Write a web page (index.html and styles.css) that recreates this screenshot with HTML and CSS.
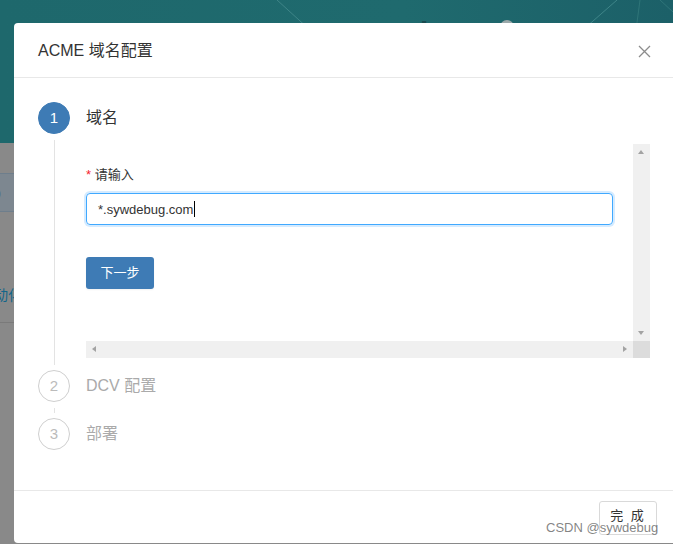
FILE: index.html
```html
<!DOCTYPE html>
<html lang="zh-CN">
<head>
<meta charset="utf-8">
<title>ACME 域名配置</title>
<link rel="stylesheet" href="styles.css">
</head>
<body>
<div class="page">
  <div class="backdrop">
    <div class="bg-top">
      <svg class="bg-lines" width="673" height="143" viewBox="0 0 673 143">
        <line x1="277" y1="0" x2="310" y2="30" stroke="#3f8588" stroke-width="1"/>
        <line x1="617" y1="0" x2="585" y2="28" stroke="#3f8588" stroke-width="1"/>
        <line x1="640" y1="0" x2="636" y2="30" stroke="#2f7578" stroke-width="1"/>
        <line x1="660" y1="0" x2="673" y2="12" stroke="#2f7578" stroke-width="1"/>
        <circle cx="507" cy="27" r="7" fill="#9aa8a9"/>
      </svg>
      <div class="bg-brand">Certimate</div>
    </div>
    <div class="bg-bottom">
      <div class="bg-box">)</div>
      <div class="bg-link">自动化</div>
      <div class="bg-rule"></div>
    </div>
  </div>

  <div class="modal">
    <div class="modal-header">
      <div class="modal-title">ACME 域名配置</div>
      <svg class="modal-close" width="13" height="13" viewBox="0 0 13 13">
        <path d="M1 1 L12 12 M12 1 L1 12" stroke="#8c8c8c" stroke-width="1.3" fill="none"/>
      </svg>
    </div>

    <div class="modal-body">
      <div class="step step-active">
        <div class="step-rail">
          <div class="step-dot">1</div>
          <div class="step-line"></div>
        </div>
        <div class="step-main">
          <div class="step-title">域名</div>
          <div class="scroll-box">
            <div class="scroll-content">
              <div class="field-label"><span class="req">*</span> 请输入</div>
              <div class="input-focus"><span>*.sywdebug.com</span><span class="caret"></span></div>
              <div class="btn-primary">下一步</div>
            </div>
            <div class="vscroll">
              <span class="arr arr-up"></span>
              <span class="arr arr-down"></span>
            </div>
            <div class="hscroll">
              <span class="arr arr-left"></span>
              <span class="arr arr-right"></span>
            </div>
            <div class="scroll-corner"></div>
          </div>
        </div>
      </div>

      <div class="step">
        <div class="step-rail">
          <div class="step-dot">2</div>
          <div class="step-line"></div>
        </div>
        <div class="step-main">
          <div class="step-title">DCV 配置</div>
        </div>
      </div>

      <div class="step step-last">
        <div class="step-rail">
          <div class="step-dot">3</div>
        </div>
        <div class="step-main">
          <div class="step-title">部署</div>
        </div>
      </div>
    </div>

    <div class="modal-footer">
      <div class="btn-default">完 成</div>
    </div>
  </div>

  <div class="watermark">CSDN @sywdebug</div>
</div>
</body>
</html>
```

FILE: styles.css
```css
* { box-sizing: border-box; }

html, body {
  margin: 0;
  padding: 0;
}

body {
  font-family: "Liberation Sans", "Noto Sans CJK SC", sans-serif;
  color: #333;
  background: #898989;
}

.page {
  position: relative;
  width: 673px;
  height: 544px;
  overflow: hidden;
}

/* ---------- backdrop (masked page behind the modal) ---------- */
.backdrop {
  display: flex;
  flex-direction: column;
  height: 544px;
}

.bg-top {
  position: relative;
  height: 143px;
  background: linear-gradient(90deg, #1e686c 0%, #1f6a6e 60%, #1c6068 100%);
  overflow: hidden;
}

.bg-lines {
  position: absolute;
  left: 0;
  top: 0;
}

.bg-brand {
  position: absolute;
  left: 348px;
  top: 18px;
  font-size: 30px;
  line-height: 30px;
  font-weight: bold;
  color: #1a4a4f;
  letter-spacing: 3px;
}

.bg-bottom {
  flex: 1;
  background: #898989;
  padding-top: 30px;
}

.bg-box {
  height: 39px;
  width: 14px;
  background: #7d8790;
  border-top: 1px solid #6e7e8c;
  border-bottom: 1px solid #6e7e8c;
  font-size: 15px;
  line-height: 37px;
  color: #2a3a44;
  text-indent: -4px;
  overflow: hidden;
}

.bg-link {
  margin-top: 72px;
  margin-left: -20px;
  font-size: 14px;
  color: #13668a;
  white-space: nowrap;
}

.bg-rule {
  margin-top: 18px;
  height: 1px;
  width: 14px;
  background: #7a7a7a;
}

/* ---------- modal ---------- */
.modal {
  position: absolute;
  left: 14px;
  top: 23px;
  width: 662px;
  height: 520px;
  background: #fff;
  border-radius: 4px;
  display: flex;
  flex-direction: column;
}

.modal-header {
  height: 55px;
  flex: none;
  display: flex;
  align-items: center;
  justify-content: space-between;
  padding: 0 24px 0 24px;
  border-bottom: 1px solid #e8e8e8;
}

.modal-title {
  font-size: 16px;
  color: #333;
  line-height: 22px;
  padding-top: 1px;
}

.modal-close {
  display: block;
  margin-right: 1px;
  margin-top: 2px;
}

.modal-body {
  flex: 1;
  padding: 24px 0 0 24px;
}

/* ---------- steps ---------- */
.step {
  display: grid;
  grid-template-columns: 32px 1fr;
  column-gap: 16px;
}

.step-rail {
  display: flex;
  flex-direction: column;
  align-items: center;
}

.step-dot {
  width: 32px;
  height: 32px;
  flex: none;
  border-radius: 50%;
  border: 1px solid #cfcfcf;
  color: #bbb;
  font-size: 15px;
  line-height: 30px;
  text-align: center;
}

.step-active .step-dot {
  background: #3e7bb5;
  border-color: #3e7bb5;
  color: #fff;
}

.step-line {
  flex: 1;
  width: 1px;
  background: #e3e3e3;
  margin: 6px 0 5px;
}

.step-main {
  padding-bottom: 16px;
}

.step-active .step-main {
  padding-bottom: 12px;
}

.step-title {
  font-size: 16px;
  line-height: 32px;
  height: 32px;
  color: #aaa;
}

.step-active .step-title {
  color: #333;
}

/* ---------- scroll box ---------- */
.scroll-box {
  margin-top: 10px;
  width: 564px;
  height: 214px;
  display: grid;
  grid-template-columns: 547px 17px;
  grid-template-rows: 197px 17px;
}

.scroll-content {
  padding-top: 21px;
}

.field-label {
  font-size: 13px;
  line-height: 20px;
  color: #333;
}

.req {
  color: #f5222d;
  font-family: "Liberation Sans", sans-serif;
}

.input-focus {
  margin-top: 8px;
  width: 527px;
  height: 32px;
  border: 1px solid #40a9ff;
  border-radius: 4px;
  box-shadow: 0 0 0 2px rgba(24, 144, 255, 0.18);
  padding-left: 11px;
  display: flex;
  align-items: center;
  font-size: 13px;
  color: #333;
}

.caret {
  display: inline-block;
  width: 1px;
  height: 16px;
  background: #000;
  margin-left: 1px;
}

.btn-primary {
  margin-top: 32px;
  width: 68px;
  height: 32px;
  background: #3e7bb5;
  border-radius: 3px;
  color: #fff;
  font-size: 13px;
  line-height: 32px;
  text-align: center;
  box-shadow: 0 1px 2px rgba(0, 0, 0, 0.06);
}

.vscroll {
  background: #f0f0f0;
  position: relative;
}

.hscroll {
  background: #f0f0f0;
  position: relative;
}

.scroll-corner {
  background: #dcdcdc;
}

.arr {
  position: absolute;
  width: 0;
  height: 0;
}

.arr-up {
  left: 5px;
  top: 6px;
  border-left: 3.5px solid transparent;
  border-right: 3.5px solid transparent;
  border-bottom: 4px solid #a3a3a3;
}

.arr-down {
  left: 5px;
  bottom: 6px;
  border-left: 3.5px solid transparent;
  border-right: 3.5px solid transparent;
  border-top: 4px solid #a3a3a3;
}

.arr-left {
  left: 6px;
  top: 5px;
  border-top: 3.5px solid transparent;
  border-bottom: 3.5px solid transparent;
  border-right: 4px solid #a3a3a3;
}

.arr-right {
  right: 6px;
  top: 5px;
  border-top: 3.5px solid transparent;
  border-bottom: 3.5px solid transparent;
  border-left: 4px solid #a3a3a3;
}

/* ---------- footer ---------- */
.modal-footer {
  height: 53px;
  flex: none;
  border-top: 1px solid #e8e8e8;
  display: flex;
  justify-content: flex-end;
  align-items: flex-start;
  padding: 10px 19px 0 0;
}

.btn-default {
  width: 58px;
  height: 34px;
  border: 1px solid #d9d9d9;
  border-radius: 3px;
  font-size: 13px;
  line-height: 28px;
  text-align: center;
  color: #333;
  letter-spacing: 2px;
}

.watermark {
  position: absolute;
  left: 546px;
  top: 519px;
  font-size: 13px;
  line-height: 18px;
  color: rgba(110, 110, 110, 0.85);
  white-space: nowrap;
}
```
